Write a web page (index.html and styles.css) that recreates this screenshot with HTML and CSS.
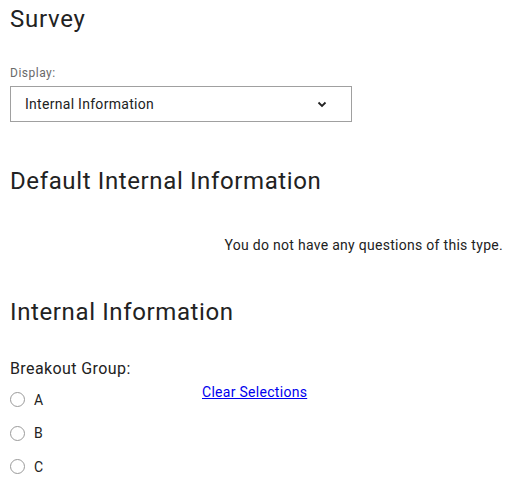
FILE: index.html
```html
<!DOCTYPE html>
<html>
<head>
<meta charset="utf-8">
<link rel="stylesheet" href="styles.css">
</head>
<body>
<div class="page">
  <h1 class="title">Survey</h1>
  <div class="display">
    <label class="display-label">Display:</label>
    <div class="select">
      <span class="select-value">Internal Information</span>
      <svg class="chevron" width="10" height="7" viewBox="0 0 10 7"><path d="M1.5 1.5 L5 5 L8.5 1.5" fill="none" stroke="#222" stroke-width="1.8"/></svg>
    </div>
  </div>
  <h2 class="section-title first">Default Internal Information</h2>
  <p class="empty">You do not have any questions of this type.</p>
  <h2 class="section-title">Internal Information</h2>
  <div class="question">
    <div class="options">
      <div class="q-label">Breakout Group:</div>
      <div class="radio-row"><span class="radio"></span><span class="radio-label">A</span></div>
      <div class="radio-row"><span class="radio"></span><span class="radio-label">B</span></div>
      <div class="radio-row"><span class="radio"></span><span class="radio-label">C</span></div>
    </div>
    <a class="clear" href="#">Clear Selections</a>
  </div>
</div>
</body>
</html>
```

FILE: styles.css
```css
html, body {
  margin: 0;
  padding: 0;
  background: #fff;
}
body {
  font-family: Roboto, "Liberation Sans", sans-serif;
  color: #222;
  letter-spacing: 0.018em;
}
.page {
  padding: 5px 12px 0 10px;
}
.title {
  margin: 0;
  font-size: 24px;
  line-height: 28px;
  font-weight: 400;
  letter-spacing: 0.03em;
}
.display {
  margin-top: 33px;
  width: 342px;
}
.display-label {
  display: block;
  font-size: 12px;
  line-height: 14px;
  letter-spacing: 0.5px;
  color: #6a6a6a;
}
.select {
  margin-top: 6px;
  height: 34px;
  border: 1px solid #a0a0a0;
  display: flex;
  align-items: center;
  justify-content: space-between;
  padding: 0 24px 0 14px;
}
.select-value {
  font-size: 14px;
}
.chevron {
  display: block;
}
.section-title {
  margin: 0;
  font-size: 24px;
  line-height: 28px;
  font-weight: 400;
  letter-spacing: 0.026em;
}
.section-title.first {
  margin-top: 45px;
}
.empty {
  margin: 40px 0 0;
  text-align: right;
  font-size: 14px;
  line-height: 20px;
}
.empty + .section-title {
  margin-top: 43px;
}
.question {
  margin-top: 33px;
  display: flex;
  align-items: flex-start;
}
.options {
  width: 192px;
}
.q-label {
  font-size: 16px;
  line-height: 20px;
  letter-spacing: 0.025em;
  margin-bottom: 4px;
}
.radio-row {
  display: flex;
  align-items: center;
  height: 33.5px;
}
.radio {
  width: 13px;
  height: 13px;
  border: 1px solid #9a9a9a;
  border-radius: 50%;
  box-sizing: content-box;
  margin-right: 9px;
}
.radio-label {
  font-size: 14px;
}
.clear {
  margin-top: 24px;
  font-size: 14px;
  line-height: 18px;
  color: #0000ee;
  text-decoration: underline;
}
```
